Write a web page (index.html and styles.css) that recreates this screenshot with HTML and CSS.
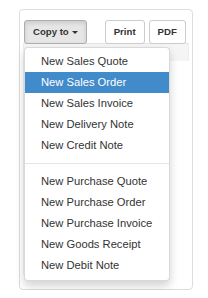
FILE: index.html
```html
<!DOCTYPE html>
<html lang="en">
<head>
<meta charset="UTF-8">
<meta name="viewport" content="width=device-width, initial-scale=1.0">
<title>Copy to</title>
<link rel="stylesheet" href="styles.css">
</head>
<body>

<div class="panel">
  <div class="toolbar">
    <div class="btn-group">
      <button class="btn active">Copy to <span class="caret"></span></button>
      <ul class="dropdown-menu">
        <li><a href="#">New Sales Quote</a></li>
        <li class="selected"><a href="#">New Sales Order</a></li>
        <li><a href="#">New Sales Invoice</a></li>
        <li><a href="#">New Delivery Note</a></li>
        <li><a href="#">New Credit Note</a></li>
        <li class="divider"></li>
        <li><a href="#">New Purchase Quote</a></li>
        <li><a href="#">New Purchase Order</a></li>
        <li><a href="#">New Purchase Invoice</a></li>
        <li><a href="#">New Goods Receipt</a></li>
        <li><a href="#">New Debit Note</a></li>
      </ul>
    </div>
    <span class="sep"></span>
    <button class="btn">Print</button>
    <button class="btn">PDF</button>
  </div>
  <div class="grid">
    <div class="grid-head"></div>
  </div>
</div>

</body>
</html>
```

FILE: styles.css
```css
body {
  margin: 0;
  padding: 9px 15px 0 19px;
  font-family: "Liberation Sans", Arial, sans-serif;
  color: #333;
  background-color: #fff;
}

.panel {
  height: 279px;
  border: 1px solid #ddd;
  border-radius: 4px;
  padding: 0 3px 0 3px;
}

.toolbar {
  display: flex;
  align-items: stretch;
  padding: 10px 0 0 1px;
  height: 33px;
  box-sizing: border-box;
}

.btn-group {
  position: relative;
  flex: none;
  height: 24px;
}

.btn {
  flex: none;
  height: 24px;
  padding: 0 8px;
  font-family: inherit;
  font-size: 9.6px;
  font-weight: bold;
  line-height: 22px;
  white-space: nowrap;
  color: #333;
  background-color: #fff;
  border: 1px solid #ccc;
  border-radius: 3px;
  margin-right: 4px;
}

.btn.active {
  display: flex;
  align-items: center;
  background-color: #e6e6e6;
  border-color: #adadad;
  box-shadow: inset 0 2px 4px rgba(0, 0, 0, 0.125);
  padding: 0 8px;
  margin-right: 0;
}

.caret {
  display: inline-block;
  width: 0;
  height: 0;
  margin-left: 3px;
  margin-top: 1px;
  border-top: 3px solid #333;
  border-left: 3px solid transparent;
  border-right: 3px solid transparent;
}

.sep {
  width: 1px;
  background-color: #e8e8e8;
  margin: 0 9px 0 9px;
}

.dropdown-menu {
  position: absolute;
  top: 27px;
  left: 0;
  z-index: 10;
  width: 144px;
  margin: 0;
  padding: 3px 0 4px;
  list-style: none;
  background-color: #fff;
  border: 1px solid rgba(0, 0, 0, 0.15);
  border-radius: 4px;
  box-shadow: 0 5px 10px rgba(0, 0, 0, 0.175);
}

.dropdown-menu a {
  display: block;
  padding: 3px 16px;
  font-size: 11.2px;
  line-height: 15px;
  color: #333;
  text-decoration: none;
  white-space: nowrap;
}

.dropdown-menu .selected a {
  color: #fff;
  background-color: #428bca;
}

.dropdown-menu .divider {
  height: 1px;
  margin: 7px 0;
  background-color: #e5e5e5;
}

.grid {
  height: 232px;
  border-left: 1px solid #eee;
}

.grid-head {
  height: 17px;
  background-color: #f5f5f5;
  border-top: 1px solid #e3e3e3;
  border-right: 1px solid #eee;
}
```
